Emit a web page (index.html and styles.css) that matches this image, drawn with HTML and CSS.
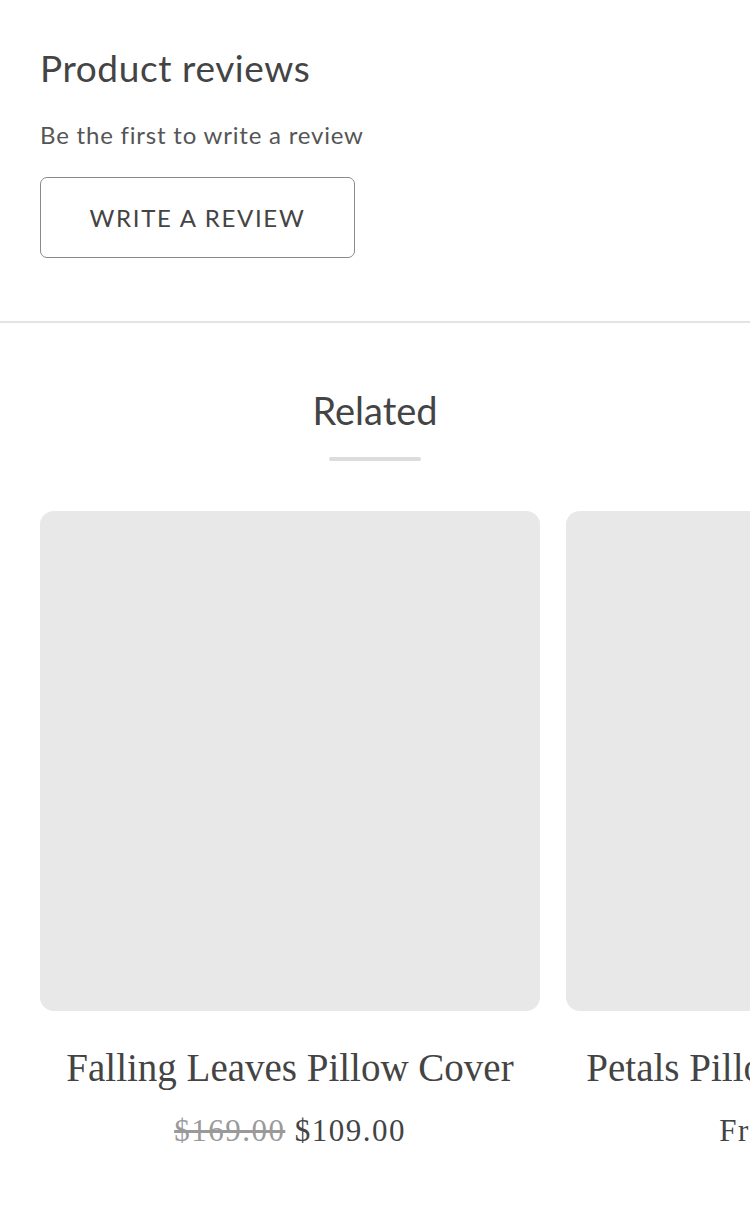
FILE: index.html
```html
<!DOCTYPE html>
<html>
<head>
<meta charset="utf-8">
<link rel="stylesheet" href="styles.css">
</head>
<body>
<section class="reviews">
  <h2 class="reviews-title">Product reviews</h2>
  <p class="reviews-sub">Be the first to write a review</p>
  <button class="btn-review">WRITE A REVIEW</button>
</section>
<section class="related">
  <h2 class="related-title">Related</h2>
  <div class="related-bar"></div>
  <div class="carousel">
    <div class="card">
      <div class="card-img"></div>
      <div class="card-name">Falling Leaves Pillow Cover</div>
      <div class="card-price"><s class="old">$169.00</s> $109.00</div>
    </div>
    <div class="card">
      <div class="card-img"></div>
      <div class="card-name">Petals Pillow Cover - Natural</div>
      <div class="card-price">From $109.00</div>
    </div>
  </div>
</section>
</body>
</html>
```
FILE: styles.css
```css
html, body { margin: 0; padding: 0; background: #fff; }
body { width: 750px; height: 1221px; overflow: hidden; font-family: "Lato", "Open Sans", sans-serif; color: #3d3d3d; }
.reviews { padding: 42px 40px 63px; border-bottom: 2px solid #e3e3e3; }
.reviews-title { margin: 0; font-weight: 400; font-size: 37px; line-height: 52px; color: #444; letter-spacing: 0.6px; }
.reviews-sub { margin: 25px 0 0; font-size: 24px; line-height: 32px; color: #555; letter-spacing: 0.8px; }
.btn-review { margin-top: 26px; width: 315px; height: 81px; background: #fff; border: 1.5px solid #8a8a8a; border-radius: 7px; font-family: inherit; font-size: 24px; letter-spacing: 1.7px; color: #444; padding: 0; }
.related { padding-top: 62px; }
.related-title { margin: 0; text-align: center; font-weight: 400; font-size: 38px; line-height: 50px; color: #444; }
.related-bar { width: 92px; height: 4px; background: #dcdcdc; margin: 22px auto 0; border-radius: 2px; }
.carousel { display: flex; gap: 26px; padding-left: 40px; margin-top: 50px; }
.card { flex: 0 0 500px; text-align: center; }
.card-img { height: 500px; background: #e8e8e8; border-radius: 14px; }
.card-name { font-family: "Liberation Serif", serif; font-size: 39px; line-height: 50px; color: #444; margin-top: 32px; white-space: nowrap; }
.card-price { font-family: "Liberation Serif", serif; font-size: 31px; line-height: 36px; color: #444; margin-top: 20px; letter-spacing: 1.5px; }
.old { color: #9a9a9a; }
```
